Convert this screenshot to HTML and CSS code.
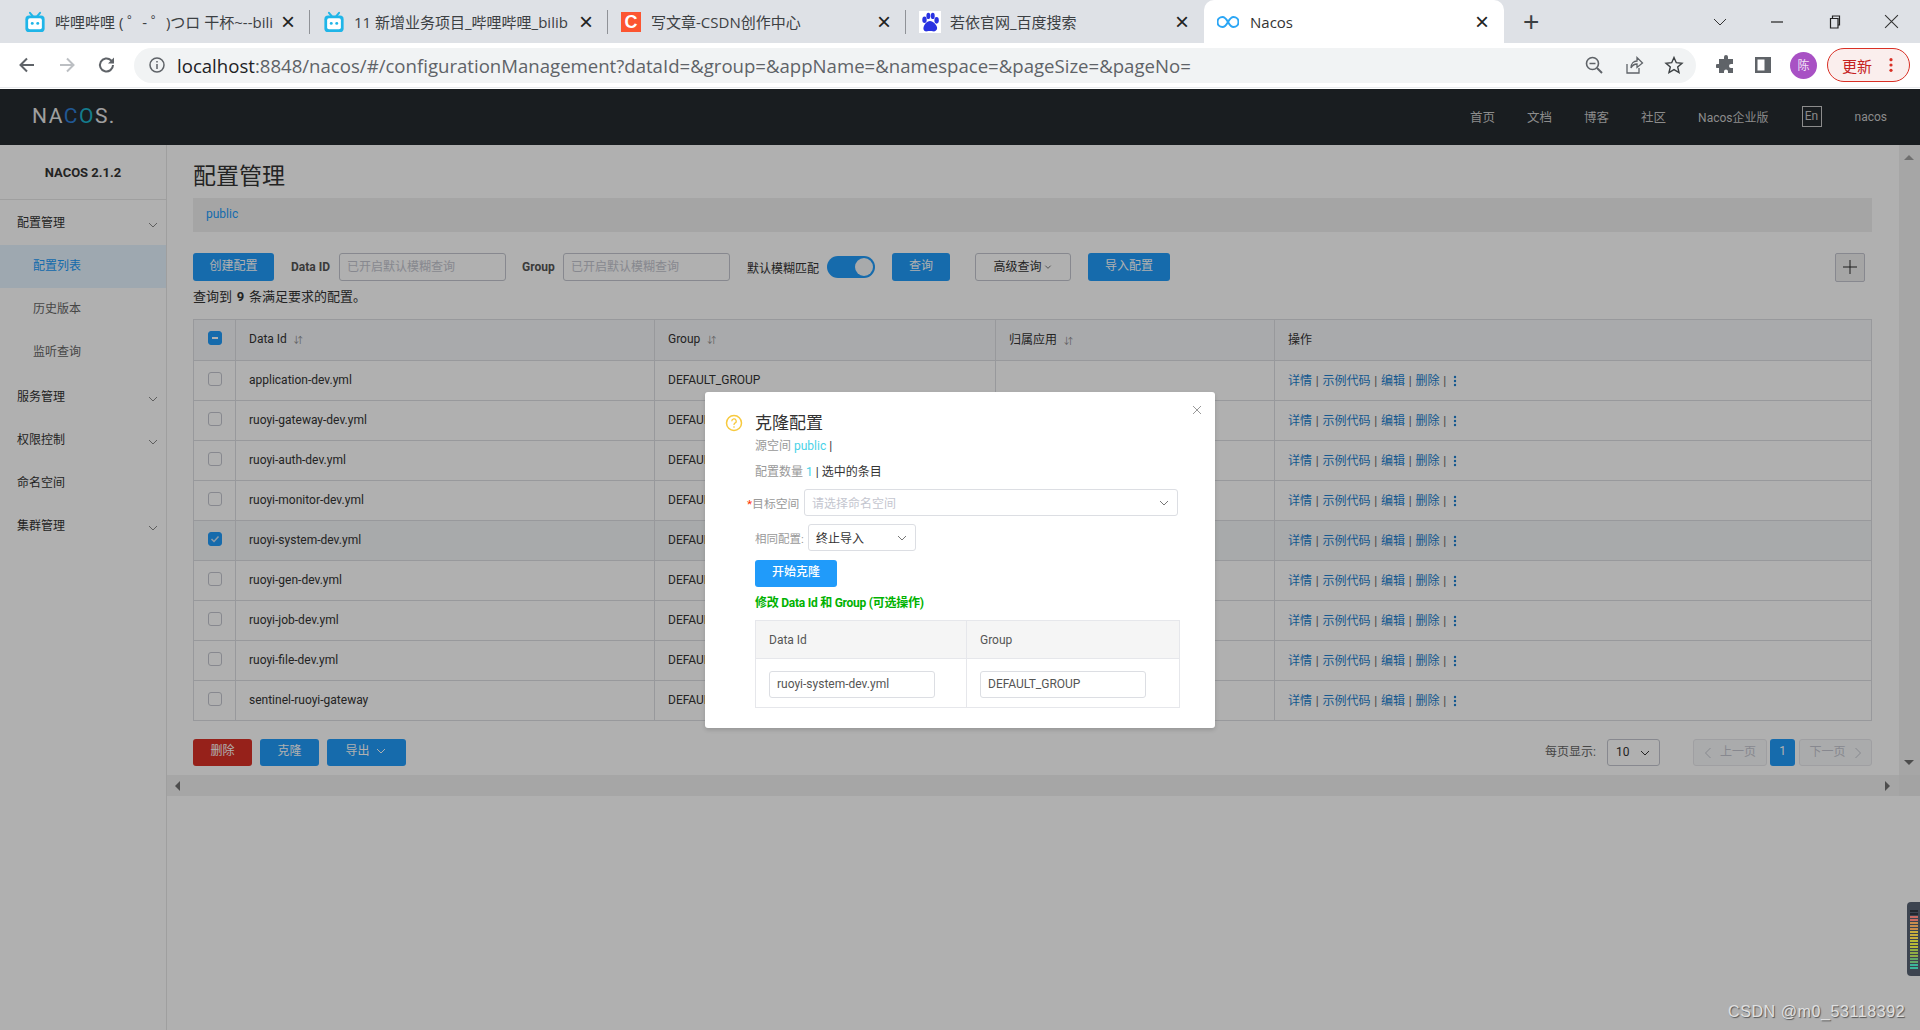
FILE: index.html
```html
<!DOCTYPE html>
<html lang="zh-CN">
<head>
<meta charset="utf-8">
<title>Nacos</title>
<link rel="stylesheet" href="styles.css">
</head>
<body>
<svg class="defs" width="0" height="0">
  <symbol id="bili" viewBox="0 0 24 24"><path d="M6.5 2 9.5 5.5M17.5 2 14.500 5.500" stroke="#1fb5e8" stroke-width="2.200" stroke-linecap="round" fill="none"/><rect x="1.500" y="5" width="21" height="18" rx="4" fill="#1fb5e8"/><rect x="4.500" y="8" width="15" height="12" rx="2" fill="#fff"/><circle cx="9" cy="13.500" r="1.600" fill="#1fb5e8"/><circle cx="15" cy="13.500" r="1.600" fill="#1fb5e8"/></symbol>
  <symbol id="chev" viewBox="0 0 12 12"><path d="M2 4 6 8 10 4" fill="none" stroke="currentColor" stroke-width="1"/></symbol>
  <symbol id="dots" viewBox="0 0 4 12"><circle cx="2" cy="2" r="1.200" fill="currentColor"/><circle cx="2" cy="6" r="1.200" fill="currentColor"/><circle cx="2" cy="10" r="1.200" fill="currentColor"/></symbol>
</svg>

<header class="chrome">
  <div class="tabstrip">
    <div class="tab tab-first"><svg class="favicon"><use href="#bili"/></svg><span class="tab-title">哔哩哔哩 ( ゜- ゜)つロ 干杯~--bili</span><span class="tab-x">×</span></div>
    <div class="tab"><svg class="favicon"><use href="#bili"/></svg><span class="tab-title">11 新增业务项目_哔哩哔哩_bilib</span><span class="tab-x">×</span></div>
    <div class="tab"><span class="csdn-icon">C</span><span class="tab-title">写文章-CSDN创作中心</span><span class="tab-x">×</span></div>
    <div class="tab tab-last"><svg class="favicon" viewBox="0 0 20 20"><rect width="20" height="20" fill="#fff"/><g fill="#2932e1"><ellipse cx="5" cy="8" rx="2" ry="3"/><ellipse cx="8.500" cy="4.500" rx="1.800" ry="2.800"/><ellipse cx="12.500" cy="4.500" rx="1.800" ry="2.800"/><ellipse cx="16" cy="8.500" rx="2" ry="3"/><path d="M10 9c-3 0-6 4-6 7 0 2 2 3 3.500 2.500 1-.3 4-.3 5 0C14 19 16.500 18 16.500 15.500 16.500 13 13 9 10 9z"/></g></svg><span class="tab-title">若依官网_百度搜索</span><span class="tab-x">×</span></div>
    <div class="tab tab-active"><svg class="favicon" viewBox="0 0 22 14"><path d="M11 7C9 3.500 7.500 2 5.500 2a5 5 0 0 0 0 10C7.500 12 9 10.500 11 7c2-3.500 3.500-5 5.500-5a5 5 0 0 1 0 10C14.500 12 13 10.500 11 7z" fill="none" stroke="#2ba6f5" stroke-width="2"/></svg><span class="tab-title">Nacos</span><span class="tab-x">×</span></div>
    <span class="newtab">+</span>
    <div class="winctl">
      <svg class="win-chev" viewBox="0 0 14 8"><path d="M1 1 7 7 13 1" fill="none" stroke="#333" stroke-width="1"/></svg>
      <svg class="win-btn" viewBox="0 0 14 14"><path d="M1 7H13" stroke="#222" stroke-width="1.200"/></svg>
      <svg class="win-btn" viewBox="0 0 14 14"><path d="M3.500 3.500H11V13H3.500zM5.500 3.500V1H12.500V10H11" fill="none" stroke="#222" stroke-width="1.200"/></svg>
      <svg class="win-btn" viewBox="0 0 14 14"><path d="M1 1 13 13M13 1 1 13" stroke="#333" stroke-width="1"/></svg>
    </div>
  </div>
  <div class="toolbar">
    <svg class="nav-ic" viewBox="0 0 20 20"><path d="M17 10H4M10 3.500 3.500 10 10 16.500" fill="none" stroke="#5f6368" stroke-width="2"/></svg>
    <svg class="nav-ic" viewBox="0 0 20 20"><path d="M3 10H16M10 3.500 16.500 10 10 16.500" fill="none" stroke="#bcbfc3" stroke-width="2"/></svg>
    <svg class="nav-ic" viewBox="0 0 20 20"><path d="M16 10a6.500 6.500 0 1 1-2-4.700L16.500 7.500" fill="none" stroke="#5f6368" stroke-width="2"/><path d="M17 2.500V8.500H11z" fill="#5f6368"/></svg>
    <div class="omnibox">
      <svg class="info-ic" viewBox="0 0 16 16"><circle cx="8" cy="8" r="7" fill="none" stroke="#5f6368" stroke-width="1.500"/><path d="M8 7V12M8 4V5.500" stroke="#5f6368" stroke-width="1.500"/></svg>
      <span class="url"><span class="url-host">localhost</span>:8848/nacos/#/configurationManagement?dataId=&amp;group=&amp;appName=&amp;namespace=&amp;pageSize=&amp;pageNo=</span>
      <svg class="omni-ic" viewBox="0 0 20 20"><circle cx="8.500" cy="8.500" r="6" fill="none" stroke="#5f6368" stroke-width="1.600"/><path d="M13 13 18 18" stroke="#5f6368" stroke-width="2"/><path d="M5.500 8.500H11.500" stroke="#5f6368" stroke-width="1.500"/></svg>
      <svg class="omni-ic" viewBox="0 0 20 20"><path d="M3 9V18H15V13" fill="none" stroke="#5f6368" stroke-width="1.300"/><path d="M7 13C7 8 10 6 13 6V2.500L18.500 8 13 12.500V9C10 9 8.500 10 7 13z" fill="none" stroke="#5f6368" stroke-width="1.300"/></svg>
      <svg class="omni-ic" viewBox="0 0 20 20"><path d="M10 2.500 12.300 7.700 18 8.200 13.700 12 15 17.500 10 14.600 5 17.500 6.300 12 2 8.200 7.700 7.700z" fill="none" stroke="#3c4043" stroke-width="1.400"/></svg>
    </div>
    <svg class="tool-ic" viewBox="0 0 20 20"><path d="M8 2a2 2 0 0 1 4 0v2h5v5h-2a2 2 0 0 0 0 4h2v5h-5v-1.500a2 2 0 0 0-4 0V18H3v-5H1.500a2 2 0 0 1 0-4H3V4h5z" fill="#5f6368"/></svg>
    <svg class="tool-ic" viewBox="0 0 20 20"><path d="M2 2H18V18H2z M4.500 4.500V15.500H11.500V4.500z" fill="#5f6368" fill-rule="evenodd"/></svg>
    <span class="avatar">陈</span>
    <span class="update"><span>更新</span><svg class="update-dots"><use href="#dots"/></svg></span>
  </div>
</header>

<div class="app">
  <div class="topnav">
    <div class="logo"><span>NA</span><span class="logo-c">C</span><span class="logo-o">O</span><span>S.</span></div>
    <nav class="topnav-links">
      <span class="tn tn1">首页</span><span class="tn tn2">文档</span><span class="tn tn2">博客</span><span class="tn tn2">社区</span><span class="tn tn3">Nacos企业版</span><span class="tn-lang">En</span><span class="tn tn4">nacos</span>
    </nav>
  </div>
  <div class="workspace">
    <aside class="sidebar">
      <div class="side-title">NACOS 2.1.2</div>
      <div class="side-item side-first"><span>配置管理</span><svg class="side-chev"><use href="#chev"/></svg></div>
      <div class="side-sub active">配置列表</div>
      <div class="side-sub">历史版本</div>
      <div class="side-sub">监听查询</div>
      <div class="side-item"><span>服务管理</span><svg class="side-chev"><use href="#chev"/></svg></div>
      <div class="side-item"><span>权限控制</span><svg class="side-chev"><use href="#chev"/></svg></div>
      <div class="side-item"><span>命名空间</span></div>
      <div class="side-item"><span>集群管理</span><svg class="side-chev"><use href="#chev"/></svg></div>
    </aside>
    <div class="main">
      <div class="main-scroll">
        <div class="content">
          <h1 class="page-title">配置管理</h1>
          <div class="ns-bar"><a class="ns-link">public</a></div>
          <div class="filters">
            <span class="btn btn-primary btn-create">创建配置</span>
            <label class="f-label f-dataid">Data ID</label>
            <span class="f-input">已开启默认模糊查询</span>
            <label class="f-label f-group">Group</label>
            <span class="f-input">已开启默认模糊查询</span>
            <label class="f-label f-fuzzy">默认模糊匹配</label>
            <span class="switch"><span class="knob"></span></span>
            <span class="btn btn-primary btn-query">查询</span>
            <span class="btn btn-normal btn-adv">高级查询 <svg class="tiny-chev"><use href="#chev"/></svg></span>
            <span class="btn btn-primary btn-import">导入配置</span>
            <span class="btn-plus"><svg viewBox="0 0 14 14" class="plus-ic"><path d="M0 7H14M7 0V14" stroke="#2a2a2a" stroke-width="1"/></svg></span>
          </div>
          <p class="summary">查询到 <b>9</b> 条满足要求的配置。</p>
          <table class="cfg">
            <thead>
              <tr><th class="c-check"><span class="cb cb-mixed"></span></th><th class="c-id">Data Id <span class="sort">⇵</span></th><th class="c-group">Group <span class="sort">⇵</span></th><th class="c-app">归属应用 <span class="sort">⇵</span></th><th>操作</th></tr>
            </thead>
            <tbody>
              <tr><td class="c-check"><span class="cb"></span></td><td>application-dev.yml</td><td>DEFAULT_GROUP</td><td></td><td><a>详情</a> | <a>示例代码</a> | <a>编辑</a> | <a>删除</a> | <svg class="op-dots"><use href="#dots"/></svg></td></tr>
              <tr><td class="c-check"><span class="cb"></span></td><td>ruoyi-gateway-dev.yml</td><td>DEFAULT_GROUP</td><td></td><td><a>详情</a> | <a>示例代码</a> | <a>编辑</a> | <a>删除</a> | <svg class="op-dots"><use href="#dots"/></svg></td></tr>
              <tr><td class="c-check"><span class="cb"></span></td><td>ruoyi-auth-dev.yml</td><td>DEFAULT_GROUP</td><td></td><td><a>详情</a> | <a>示例代码</a> | <a>编辑</a> | <a>删除</a> | <svg class="op-dots"><use href="#dots"/></svg></td></tr>
              <tr><td class="c-check"><span class="cb"></span></td><td>ruoyi-monitor-dev.yml</td><td>DEFAULT_GROUP</td><td></td><td><a>详情</a> | <a>示例代码</a> | <a>编辑</a> | <a>删除</a> | <svg class="op-dots"><use href="#dots"/></svg></td></tr>
              <tr class="row-selected"><td class="c-check"><span class="cb cb-on"><svg viewBox="0 0 12 12"><path d="M2.500 6 5 8.500 9.500 3.500" fill="none" stroke="#cfe3f3" stroke-width="1.500"/></svg></span></td><td>ruoyi-system-dev.yml</td><td>DEFAULT_GROUP</td><td></td><td><a>详情</a> | <a>示例代码</a> | <a>编辑</a> | <a>删除</a> | <svg class="op-dots"><use href="#dots"/></svg></td></tr>
              <tr><td class="c-check"><span class="cb"></span></td><td>ruoyi-gen-dev.yml</td><td>DEFAULT_GROUP</td><td></td><td><a>详情</a> | <a>示例代码</a> | <a>编辑</a> | <a>删除</a> | <svg class="op-dots"><use href="#dots"/></svg></td></tr>
              <tr><td class="c-check"><span class="cb"></span></td><td>ruoyi-job-dev.yml</td><td>DEFAULT_GROUP</td><td></td><td><a>详情</a> | <a>示例代码</a> | <a>编辑</a> | <a>删除</a> | <svg class="op-dots"><use href="#dots"/></svg></td></tr>
              <tr><td class="c-check"><span class="cb"></span></td><td>ruoyi-file-dev.yml</td><td>DEFAULT_GROUP</td><td></td><td><a>详情</a> | <a>示例代码</a> | <a>编辑</a> | <a>删除</a> | <svg class="op-dots"><use href="#dots"/></svg></td></tr>
              <tr><td class="c-check"><span class="cb"></span></td><td>sentinel-ruoyi-gateway</td><td>DEFAULT_GROUP</td><td></td><td><a>详情</a> | <a>示例代码</a> | <a>编辑</a> | <a>删除</a> | <svg class="op-dots"><use href="#dots"/></svg></td></tr>
            </tbody>
          </table>
          <div class="footer-row">
            <span class="btn btn-danger btn-s">删除</span>
            <span class="btn btn-primary btn-s">克隆</span>
            <span class="btn btn-primary btn-export">导出 <svg class="small-chev"><use href="#chev"/></svg></span>
            <div class="pager">
              <span class="pg-label">每页显示:</span>
              <span class="pg-select"><span>10</span><svg class="small-chev"><use href="#chev"/></svg></span>
              <span class="pg-btn pg-prev"><svg class="pg-arrow" viewBox="0 0 8 12"><path d="M6.500 1 1.500 6 6.500 11" fill="none" stroke="currentColor"/></svg>上一页</span>
              <span class="pg-cur">1</span>
              <span class="pg-btn pg-next">下一页<svg class="pg-arrow" viewBox="0 0 8 12"><path d="M1.500 1 6.500 6 1.500 11" fill="none" stroke="currentColor"/></svg></span>
            </div>
          </div>
        </div>
        <div class="vscroll"><span class="arrow-up"></span><span class="arrow-down"></span></div>
      </div>
      <div class="hscroll"><span class="arrow-left"></span><span class="arrow-right"></span><span class="corner"></span></div>
    </div>
  </div>
  <div class="mask"></div>
  <div class="dialog">
    <span class="dlg-close"><svg viewBox="0 0 10 10"><path d="M1 1 9 9M9 1 1 9" stroke="#999" stroke-width="1"/></svg></span>
    <div class="dlg-head">
      <svg class="dlg-icon" viewBox="0 0 18 18"><circle cx="9" cy="9" r="7.500" fill="none" stroke="#f7c93e" stroke-width="1.500"/><path d="M6.800 7.200A2.200 2.200 0 1 1 9.800 9.200C9.200 9.500 9 10 9 11M9 12.200V13.700" fill="none" stroke="#f7c93e" stroke-width="1.300"/></svg>
      <span class="dlg-title">克隆配置</span>
    </div>
    <div class="dlg-line dlg-line1"><span class="muted">源空间</span> <span class="cyan">public</span> |</div>
    <div class="dlg-line dlg-line2"><span class="muted">配置数量</span> <span class="cyan">1</span> | 选中的条目</div>
    <div class="dlg-field dlg-target">
      <label class="dlg-label"><span class="req">*</span>目标空间</label>
      <span class="dlg-select dlg-select-wide"><span class="ph">请选择命名空间</span><svg class="small-chev"><use href="#chev"/></svg></span>
    </div>
    <div class="dlg-field dlg-policy">
      <label class="dlg-label2">相同配置:</label>
      <span class="dlg-select dlg-select-short"><span>终止导入</span><svg class="small-chev"><use href="#chev"/></svg></span>
    </div>
    <span class="dlg-btn">开始克隆</span>
    <div class="dlg-green">修改 Data Id 和 Group (可选操作)</div>
    <table class="dlg-table">
      <thead><tr><th class="dlg-c1">Data Id</th><th>Group</th></tr></thead>
      <tbody><tr><td class="dlg-c1"><span class="dlg-input">ruoyi-system-dev.yml</span></td><td><span class="dlg-input">DEFAULT_GROUP</span></td></tr></tbody>
    </table>
  </div>
  <div class="meter">
    <i class="m0"></i><i class="m0"></i><i class="m1"></i><i class="m1"></i><i class="m2"></i><i class="m2"></i><i class="m2"></i><i class="m3"></i><i class="m3"></i><i class="m3"></i><i class="m4"></i><i class="m4"></i><i class="m4"></i><i class="m5"></i><i class="m5"></i><i class="m5"></i><i class="m6"></i><i class="m6"></i><i class="m7"></i><i class="m7"></i>
  </div>
  <div class="watermark">CSDN @m0_53118392</div>
</div>
</body>
</html>
```
FILE: styles.css
```css
* { box-sizing: border-box; }
html, body { margin: 0; padding: 0; }
body {
  width: 1920px; height: 1030px; overflow: hidden; background: #fff;
  font-family: Roboto, "Noto Sans CJK SC", sans-serif; font-size: 12px; color: #333;
}
.defs { position: absolute; }
a { color: #209bfa; }

/* browser chrome */
.chrome { height: 89px; background: #fff; font-family: "Open Sans", "Noto Sans CJK SC", sans-serif; }
.tabstrip { height: 43px; background: #dee1e6; display: flex; align-items: center; }
.tab { width: 298px; height: 43px; padding: 0 14px 0 13px; display: flex; align-items: center; position: relative; color: #3c4043; font-size: 15px; }
.tab-first { width: 310px; padding-left: 24px; }
.tab::after { content: ""; position: absolute; right: 0; top: 10px; height: 24px; width: 1px; background: #8f9297; }
.tab-active::after, .tab-last::after { display: none; }
.tab-last { width: 298px; }
.tab-active { width: 300px; background: #fff; border-radius: 10px 10px 0 0; color: #333; padding-left: 13px; }
.favicon { width: 22px; height: 22px; flex: none; margin-right: 9px; }
.tab-active .favicon { width: 22px; height: 14px; margin-right: 11px; }
.csdn-icon { width: 20px; height: 20px; flex: none; margin-right: 10px; background: #fc5531; color: #fff; font: 700 18px/20px "Liberation Sans", sans-serif; text-align: center; }
.tab-title { flex: 1; overflow: hidden; white-space: nowrap; }
.tab-x { width: 16px; flex: none; font: 400 24px/20px "Liberation Sans", sans-serif; color: #222; text-align: center; margin-left: 4px; }
.newtab { margin-left: 19px; font: 400 28px/28px "Liberation Sans", sans-serif; color: #3c4043; }
.winctl { margin-left: auto; display: flex; align-items: center; height: 43px; padding-right: 21px; gap: 43px; }
.win-chev { width: 14px; height: 8px; }
.win-btn { width: 14px; height: 14px; }
.win-btn:last-child { width: 15px; height: 15px; }
.toolbar { height: 45px; display: flex; align-items: center; padding: 0 10px 0 17px; border-bottom: 1px solid #e8eaed; }
.nav-ic { width: 20px; height: 20px; margin-right: 20px; flex: none; }
.nav-ic:nth-child(3) { margin-right: 17px; }
.omnibox { width: 1562px; height: 35px; border-radius: 18px; background: #f1f3f4; display: flex; align-items: center; padding: 0 12px 0 15px; flex: none; }
.info-ic { width: 16px; height: 16px; margin-right: 12px; flex: none; }
.url { font-size: 18.600px; color: #5f6368; white-space: nowrap; flex: 1; }
.url-host { color: #202124; }
.omni-ic { width: 20px; height: 20px; margin-left: 20px; flex: none; }
.omni-ic:first-of-type { margin-left: 0; }
.tool-ic { width: 20px; height: 20px; margin-left: 20px; flex: none; }
.tool-ic + .tool-ic { margin-left: 17px; }
.avatar { margin-left: 17px; width: 27px; height: 27px; border-radius: 50%; background: #a851c4; color: #f0e0f6; font-size: 12px; line-height: 27px; text-align: center; flex: none; }
.update { margin-left: 10px; width: 83px; height: 34px; border: 1px solid #d93025; border-radius: 17px; background: #faeeed; color: #c5221f; font-size: 15px; display: flex; align-items: center; padding-left: 14px; gap: 16px; flex: none; }
.update-dots { width: 6px; height: 16px; color: #d93025; }

/* app */
.app { height: 941px; position: relative; background: #fff; display: flex; flex-direction: column; }
.topnav { height: 56px; background: #252a2f; display: flex; align-items: center; padding: 0 33px 0 32px; flex: none; }
.logo { font: 400 21px/20px Roboto, sans-serif; letter-spacing: 1.500px; color: #e6e6e6; margin-top: -2px; }
.logo-c { color: #2f7fd6; }
.logo-o { color: #1db4cc; }
.topnav-links { margin-left: auto; display: flex; align-items: center; color: #8c8c8c; font-size: 12.500px; position: relative; z-index: 5; margin-top: -1px; }
.tn1 { margin-right: 32px; }
.tn2 { margin-right: 32px; }
.tn3 { margin-right: 33px; font-size: 12px; }
.tn4 { font-size: 12px; }
.tn-lang { width: 20px; height: 21px; border: 1px solid #8c8c8c; text-align: center; line-height: 18px; margin-right: 33px; font-size: 12px; }
.workspace { flex: 1; display: flex; min-height: 0; }
.sidebar { width: 167px; flex: none; border-right: 1px solid #e6e6e6; }
.side-title { height: 55px; line-height: 56px; text-align: center; font-weight: 700; font-size: 13px; color: #333; border-bottom: 1px solid #e6e6e6; }
.side-item { height: 43px; display: flex; align-items: center; justify-content: space-between; padding: 0 7px 0 17px; color: #333; }
.side-first { height: 45px; padding-bottom: 2px; }
.side-sub { height: 43px; line-height: 43px; padding-left: 33px; color: #666; }
.side-sub.active { background: #e5f3ff; color: #209bfa; }
.side-chev { width: 12px; height: 12px; color: #888; margin-top: 7px; }
.main { flex: 1; min-width: 0; display: flex; flex-direction: column; }
.main-scroll { height: 630px; display: flex; }
.content { flex: 1; min-width: 0; padding: 13px 27px 0 26px; }
.page-title { margin: 0; height: 40px; font-size: 23px; font-weight: 400; line-height: 38px; color: #333; }
.ns-bar { height: 34px; background: #f0f0f0; padding: 0 13px; line-height: 32px; }
.ns-link { color: #209bfa; }
.filters { margin-top: 21px; height: 28px; display: flex; align-items: center; }
.btn { height: 28px; line-height: 26px; border-radius: 3px; display: inline-block; text-align: center; flex: none; font-size: 12px; }
.btn-primary { background: #209bfa; color: #fff; }
.btn-normal { background: #fff; border: 1px solid #c4c6cf; color: #333; }
.btn-danger { background: #d93026; color: #fff; }
.btn-create { width: 81px; }
.f-label { font-weight: 700; color: #555; flex: none; }
.f-dataid { margin-left: 17px; width: 48px; }
.f-group { margin-left: 16px; width: 41px; }
.f-fuzzy { margin-left: 17px; width: 80px; font-weight: 400; color: #333; }
.f-input { width: 167px; height: 28px; border: 1px solid #c4c6cf; border-radius: 3px; padding: 0 7px; line-height: 27px; color: #c4c6cf; flex: none; background: #fff; }
.switch { width: 48px; height: 22px; border-radius: 11px; background: #209bfa; position: relative; flex: none; }
.knob { position: absolute; right: 2px; top: 2px; width: 18px; height: 18px; border-radius: 50%; background: #f4f6f8; }
.btn-query { width: 58px; margin-left: 17px; }
.btn-adv { width: 96px; margin-left: 25px; }
.tiny-chev { width: 8px; height: 8px; }
.btn-import { width: 82px; margin-left: 17px; }
.btn-plus { margin-left: auto; margin-right: 7px; width: 30px; height: 29px; border: 1px solid #c4c6cf; background: #f0f0f0; border-radius: 2px; display: flex; align-items: center; justify-content: center; flex: none; }
.plus-ic { width: 14px; height: 14px; }
.summary { margin: 0; height: 38px; font-size: 13px; line-height: 32px; color: #333; word-spacing: 1.500px; }
.cfg, .dlg-table { border-collapse: collapse; table-layout: fixed; }
.cfg { width: 1679px; color: #333; }
.cfg th, .cfg td { border: 1px solid #dcdee3; padding: 0 13px 2px; height: 40px; text-align: left; font-weight: 400; white-space: nowrap; overflow: hidden; }
.cfg th { background: #f5f6fa; height: 41px; padding-bottom: 3px; }
.c-check { width: 42px; }
.cfg .c-check { padding: 0 0 3px 14px; }
.cfg th.c-check { padding-bottom: 4px; }
.c-id { width: 419px; }
.c-group { width: 341px; }
.c-app { width: 279px; }
.row-selected td { background: #f4f6f8; }
.cb { display: block; width: 14px; height: 14px; border: 1px solid #c4c6cf; border-radius: 3px; background: #fff; }
.cb-mixed, .cb-on { background: #209bfa; border-color: #209bfa; position: relative; }
.cb-mixed::after { content: ""; position: absolute; left: 3px; right: 3px; top: 5px; height: 2px; background: #fff; }
.cb-on svg { display: block; width: 12px; height: 12px; }
.sort { color: #888; font-size: 9px; margin-left: 4px; }
.cfg td:last-child { color: #666; word-spacing: .8px; }
.cfg td a { color: #1a7fd0; }
.op-dots { width: 4px; height: 12px; color: #1a7fd0; vertical-align: -2px; margin-left: 3px; }
.footer-row { margin-top: 18px; height: 27px; display: flex; align-items: center; gap: 8px; }
.footer-row .btn { height: 27px; line-height: 25px; }
.btn-s { width: 59px; }
.btn-export { width: 79px; }
.small-chev { width: 12px; height: 12px; vertical-align: -2px; margin-left: 3px; }
.pager { margin-left: auto; display: flex; align-items: center; font-size: 12px; color: #666; line-height: 23px; }
.pg-label { margin-right: 11px; }
.pg-select { width: 53px; height: 27px; border: 1px solid #c4c6cf; border-radius: 3px; display: flex; align-items: center; justify-content: space-between; padding: 0 8px; margin-right: 33px; color: #333; }
.pg-select .small-chev { margin: 0; }
.pg-btn { height: 27px; border: 1px solid #e6e7eb; border-radius: 3px; background: #f7f8fa; color: #c4c6cf; display: flex; align-items: center; justify-content: center; gap: 8px; }
.pg-prev { width: 74px; }
.pg-next { width: 73px; }
.pg-arrow { width: 8px; height: 12px; }
.pg-cur { width: 25px; height: 27px; margin: 0 4px 0 3px; background: #209bfa; border-radius: 3px; color: #fff; text-align: center; line-height: 25px; }
.vscroll { width: 21px; flex: none; background: #f1f1f1; position: relative; }
.arrow-up, .arrow-down, .arrow-left, .arrow-right { position: absolute; width: 0; height: 0; border: 5px solid transparent; }
.arrow-up { top: 5px; left: 5px; border-bottom-color: #a3a3a3; }
.arrow-down { bottom: 5px; left: 5px; border-top-color: #707070; }
.hscroll { height: 21px; background: #f1f1f1; position: relative; }
.arrow-left { left: 3px; top: 6px; border-right-color: #707070; }
.arrow-right { right: 25px; top: 6px; border-left-color: #707070; }
.corner { position: absolute; right: 0; top: 0; width: 21px; height: 21px; background: #ececec; }

/* overlay */
.mask { position: absolute; inset: 0; background: rgba(0, 0, 0, .31); }
.dialog { position: absolute; left: 705px; top: 303px; width: 510px; height: 336px; background: #fff; border-radius: 3px; box-shadow: 0 2px 4px rgba(0,0,0,.15); padding: 20px 35px 0 50px; color: #333; }
.dlg-close { position: absolute; right: 13px; top: 13px; width: 10px; height: 10px; }
.dlg-close svg { display: block; width: 10px; height: 10px; }
.dlg-head { display: flex; align-items: center; height: 22px; position: relative; }
.dlg-icon { position: absolute; left: -30px; top: 2px; width: 18px; height: 18px; }
.dlg-title { font-size: 17px; color: #333; line-height: 22px; }
.dlg-line { font-size: 12px; line-height: 18px; }
.dlg-line1 { margin-top: 3px; }
.dlg-line2 { margin-top: 8px; }
.muted { color: #999; }
.cyan { color: #49d2e7; }
.dlg-field { display: flex; align-items: center; height: 27px; }
.dlg-target { margin-top: 8px; margin-left: -8px; }
.dlg-policy { margin-top: 8px; }
.dlg-label { width: 57px; color: #999; white-space: nowrap; flex: none; font-size: 11.800px; }
.req { color: #ff3000; }
.dlg-label2 { width: 53px; color: #999; white-space: nowrap; flex: none; font-size: 11.500px; }
.dlg-select { height: 27px; border: 1px solid #dcdee3; border-radius: 3px; display: flex; align-items: center; justify-content: space-between; padding: 0 7px; }
.dlg-select .small-chev { color: #777; margin: 0; }
.dlg-select-wide { width: 374px; }
.dlg-select-short { width: 108px; }
.ph { color: #c4c6cf; }
.dlg-btn { display: block; margin-top: 9px; width: 82px; height: 27px; background: #209bfa; color: #fff; text-align: center; line-height: 25px; border-radius: 3px; font-weight: 500; }
.dlg-green { margin-top: 7px; height: 18px; line-height: 18px; color: #00b200; font-weight: 700; font-size: 12px; letter-spacing: -.25px; }
.dlg-table { margin-top: 8px; width: 425px; }
.dlg-table th, .dlg-table td { border: 1px solid #e6e7eb; padding: 0 13px; text-align: left; font-weight: 400; }
.dlg-table th { background: #f5f5f5; height: 38px; color: #555; }
.dlg-table td { height: 49px; padding-top: 2px; }
.dlg-c1 { width: 211px; }
.dlg-input { display: block; width: 166px; height: 27px; border: 1px solid #dcdee3; border-radius: 3px; padding: 0 7px; line-height: 25px; color: #555; }
.meter { position: absolute; right: 0; top: 813px; width: 13px; height: 74px; background: #3d4450; border-radius: 4px 0 0 4px; padding: 8px 2px 0 3px; display: flex; flex-direction: column; gap: 1px; }
.meter i { display: block; height: 2px; }
.m0 { background: #23272e; }
.m1 { background: #c96a62; }
.m2 { background: #c98d4d; }
.m3 { background: #c9ae3d; }
.m4 { background: #b9bb36; }
.m5 { background: #8fae45; }
.m6 { background: #62a768; }
.m7 { background: #3bb59a; }
.watermark { position: absolute; left: 1728px; top: 911px; font: 400 16px/24px "Liberation Sans", sans-serif; letter-spacing: .6px; color: #e0e0e0; text-shadow: 1px 1px 1px #555; }
```
